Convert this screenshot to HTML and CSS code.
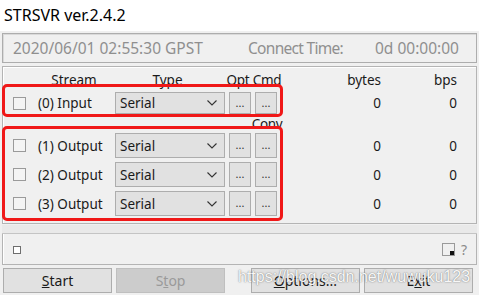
FILE: index.html
```html
<!DOCTYPE html>
<html>
<head>
<meta charset="utf-8">
<link rel="stylesheet" href="styles.css">
</head>
<body>
<div class="titlebar">STRSVR ver.2.4.2</div>
<div class="client">
  <div class="timebox">
    <span class="time">2020/06/01 02:55:30 GPST</span>
    <span class="ct">Connect Time:</span>
    <span class="ctv">0d 00:00:00</span>
  </div>
  <div class="panel">
    <div class="row head">
      <span class="cb-space"></span>
      <span class="label hc">Stream</span>
      <span class="sel-h">Type</span>
      <span class="btn-h opt">Opt</span>
      <span class="btn-h cmd">Cmd</span>
      <span class="num">bytes</span>
      <span class="num bps">bps</span>
    </div>
    <div class="row r0">
      <span class="cb"></span>
      <span class="label">(0) Input</span>
      <span class="sel">Serial<svg class="chev" width="10" height="6" viewBox="0 0 10 6"><path d="M0.5 0.5 L5 5 L9.5 0.5" fill="none" stroke="#333" stroke-width="1.1"/></svg></span>
      <span class="btn">...</span>
      <span class="btn">...</span>
      <span class="num">0</span>
      <span class="num bps">0</span>
    </div>
    <div class="row conv">
      <span class="cb-space"></span>
      <span class="label"></span>
      <span class="sel-h"></span>
      <span class="btn-h"></span>
      <span class="btn-h cmd">Conv</span>
    </div>
    <div class="row out">
      <span class="cb"></span>
      <span class="label">(1) Output</span>
      <span class="sel">Serial<svg class="chev" width="10" height="6" viewBox="0 0 10 6"><path d="M0.5 0.5 L5 5 L9.5 0.5" fill="none" stroke="#333" stroke-width="1.1"/></svg></span>
      <span class="btn">...</span>
      <span class="btn">...</span>
      <span class="num">0</span>
      <span class="num bps">0</span>
    </div>
    <div class="row out">
      <span class="cb"></span>
      <span class="label">(2) Output</span>
      <span class="sel">Serial<svg class="chev" width="10" height="6" viewBox="0 0 10 6"><path d="M0.5 0.5 L5 5 L9.5 0.5" fill="none" stroke="#333" stroke-width="1.1"/></svg></span>
      <span class="btn">...</span>
      <span class="btn">...</span>
      <span class="num">0</span>
      <span class="num bps">0</span>
    </div>
    <div class="row out">
      <span class="cb"></span>
      <span class="label">(3) Output</span>
      <span class="sel">Serial<svg class="chev" width="10" height="6" viewBox="0 0 10 6"><path d="M0.5 0.5 L5 5 L9.5 0.5" fill="none" stroke="#333" stroke-width="1.1"/></svg></span>
      <span class="btn">...</span>
      <span class="btn">...</span>
      <span class="num">0</span>
      <span class="num bps">0</span>
    </div>
  </div>
  <div class="strip"></div>
  <div class="status">
    <span class="mini-cb"></span>
    <span class="spacer"></span>
    <svg class="sel-icon" width="13" height="13" viewBox="0 0 13 13"><rect x="0.5" y="0.5" width="12" height="12" fill="none" stroke="#444" stroke-width="1" stroke-dasharray="1 1"/><rect x="8" y="8" width="4" height="4" fill="#111"/></svg>
    <span class="help">?</span>
  </div>
  <div class="buttons">
    <span class="pbtn"><u>S</u>tart</span>
    <span class="pbtn disabled">S<u>t</u>op</span>
    <span class="gap"></span>
    <span class="pbtn"><u>O</u>ptions...</span>
    <span class="pbtn">E<u>x</u>it</span>
  </div>
  <div class="mark mark1"></div>
  <div class="mark mark2"></div>
  <div class="watermark">https://blog.csdn.net/wuwuku123</div>
</div>
</body>
</html>
```
FILE: styles.css
```css
* { box-sizing: border-box; }
html, body { margin: 0; padding: 0; }
body {
  width: 479px;
  height: 295px;
  overflow: hidden;
  background: #ffffff;
  font-family: "Noto Sans", "Liberation Sans", sans-serif;
  color: #1a1a1a;
}
.titlebar {
  height: 31px;
  padding: 5px 0 0 4px;
  font-size: 16px;
  line-height: 20px;
  color: #000;
  background: #fff;
}
.client {
  position: relative;
  height: 264px;
  background: #f0f0f0;
  padding: 2px 2px 0 2px;
}
.timebox {
  height: 30px;
  border: 1px solid #adadad;
  box-shadow: inset 1px 1px 0 #dadada;
  display: flex;
  align-items: center;
  padding-left: 10px;
  font-size: 15.5px;
  color: #8f8f8f;
}
.time { width: 235px; }
.ct { width: 127px; letter-spacing: -0.7px; }
.panel {
  margin-top: 3px;
  height: 158px;
  border: 1px solid #b4b4b4;
  box-shadow: inset 1px 1px 0 #fff;
  padding: 3px 0 0 10px;
  font-size: 13.5px;
}
.row {
  display: flex;
  align-items: center;
}
.head { height: 20px; }
.r0 { height: 22px; margin-top: 2px; }
.conv { height: 19px; }
.out { height: 25px; margin-bottom: 4px; }
.cb, .cb-space { width: 13px; height: 13px; margin-right: 12px; flex: none; }
.cb { border: 1px solid #9a9a9a; background: #f4f4f4; }
.label { width: 77px; flex: none; white-space: nowrap; }
.hc { text-align: center; padding-right: 5px; }
.sel, .sel-h { width: 110px; margin-right: 4px; flex: none; }
.sel-h { text-align: center; padding-right: 5px; }
.sel {
  height: 100%;
  background: #e1e1e1;
  border: 1px solid #adadad;
  display: flex;
  align-items: center;
  padding-left: 4px;
  position: relative;
}
.chev { position: absolute; right: 7px; top: 50%; margin-top: -3px; }
.btn, .btn-h { width: 22px; margin-right: 4px; flex: none; text-align: center; white-space: nowrap; display: flex; justify-content: center; }
.btn-h + .btn-h, .btn + .btn { margin-right: 0; }
.btn-h.opt { position: relative; left: -2px; letter-spacing: -0.3px; }
.btn-h.cmd { position: relative; left: 1px; letter-spacing: -0.3px; }
.btn {
  height: 100%;
  background: #e1e1e1;
  border: 1px solid #adadad;
  align-items: center;
  font-size: 11px;
  color: #333;
  padding-bottom: 2px;
}
.num { width: 104px; text-align: right; flex: none; }
.num.bps { width: 76px; }
.strip {
  margin-top: 1px;
  height: 9px;
  background: #e9e9e9;
  border-bottom: 1px solid #c4c4c4;
}
.status {
  height: 31px;
  border: 1px solid #b4b4b4;
  border-top: none;
  box-shadow: inset 1px 0 0 #fff;
  display: flex;
  align-items: center;
  padding: 0 9px 0 10px;
}
.mini-cb { width: 8px; height: 8px; border: 1px solid #6e6e6e; background: #fff; margin-top: 1px; }
.spacer { flex: 1; }
.sel-icon { margin-right: 6px; }
.help { font-size: 14px; color: #8a8a8a; }
.buttons {
  margin-top: 3px;
  height: 25px;
  display: flex;
  padding-left: 1px;
}
.pbtn {
  width: 110px;
  height: 25px;
  margin-right: 4px;
  background: #e1e1e1;
  border: 1px solid #adadad;
  display: flex;
  align-items: center;
  justify-content: center;
  font-size: 14px;
  color: #1a1a1a;
}
.pbtn.disabled { background: #cccccc; border-color: #bfbfbf; color: #9a9a9a; }
.gap { width: 22px; }
.mark {
  position: absolute;
  left: 2px;
  width: 281px;
  border: 3px solid #f01818;
  border-radius: 5px;
}
.mark1 { top: 53px; height: 33px; }
.mark2 { top: 95px; height: 95px; }
.watermark {
  position: absolute;
  left: 238px;
  top: 237px;
  font-family: "Liberation Sans", sans-serif;
  font-size: 16px;
  line-height: 18px;
  color: rgba(255,255,255,0.95);
  text-shadow: 0 0 1px rgba(90,90,90,0.7), 0 0 2px rgba(120,120,120,0.5);
  white-space: nowrap;
}
```
